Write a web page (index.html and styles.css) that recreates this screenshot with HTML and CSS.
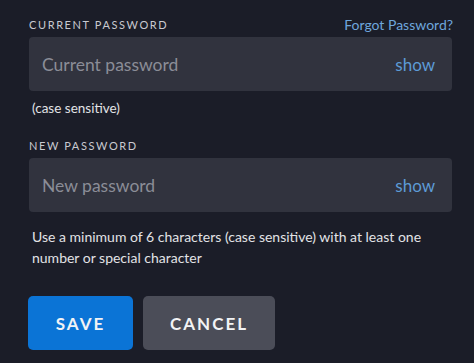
FILE: index.html
```html
<!DOCTYPE html>
<html>
<head>
<meta charset="utf-8">
<link rel="stylesheet" href="styles.css">
</head>
<body>
<form class="page">
  <div class="label-row">
    <span class="label">CURRENT PASSWORD</span>
    <a class="forgot">Forgot Password?</a>
  </div>
  <div class="field">
    <span class="placeholder">Current password</span>
    <span class="show">show</span>
  </div>
  <p class="hint">(case sensitive)</p>
  <div class="label-row second">
    <span class="label">NEW PASSWORD</span>
  </div>
  <div class="field">
    <span class="placeholder">New password</span>
    <span class="show">show</span>
  </div>
  <p class="help">Use a minimum of 6 characters (case sensitive) with at least one number or special character</p>
  <div class="buttons">
    <button type="button" class="btn save">SAVE</button>
    <button type="button" class="btn cancel">CANCEL</button>
  </div>
</form>
</body>
</html>
```
FILE: styles.css
```css
html, body {
  margin: 0;
  padding: 0;
  background: #1b1d28;
  font-family: Lato, "Open Sans", sans-serif;
  height: 100%;
}
.page {
  display: flex;
  flex-direction: column;
  padding: 16px 22px 0 29px;
}
.label-row {
  display: flex;
  justify-content: space-between;
  align-items: center;
  height: 16px;
  margin-bottom: 5px;
}
.label-row.second {
  margin-top: 21px;
}
.label {
  color: #c9cad0;
  font-size: 11px;
  letter-spacing: 1.6px;
}
.forgot {
  color: #6ea6dc;
  font-size: 14px;
  margin-right: -1px;
}
.field {
  display: flex;
  justify-content: space-between;
  align-items: center;
  height: 54px;
  background: #31333e;
  border-radius: 4px;
  padding: 0 17px 0 13px;
}
.placeholder {
  color: #8b8d97;
  font-size: 17.5px;
}
.show {
  color: #5d9bd6;
  font-size: 17px;
}
.hint {
  margin: 9px 0 0 3px;
  line-height: 16px;
  color: #e2e3e6;
  font-size: 13.5px;
}
.help {
  margin: 14px 0 0 3px;
  line-height: 21px;
  color: #e2e3e6;
  font-size: 14px;
}
.buttons {
  display: flex;
  gap: 10px;
  margin-top: 28px;
}
.btn {
  height: 54px;
  border: none;
  border-radius: 5px;
  color: #f2f3f5;
  font-family: Lato, sans-serif;
  font-weight: bold;
  font-size: 17px;
  letter-spacing: 2px;
  padding: 0;
}
.save {
  width: 105px;
  background: #0b74d6;
  margin-left: -1px;
}
.cancel {
  width: 132px;
  background: #4b4d58;
}
```
